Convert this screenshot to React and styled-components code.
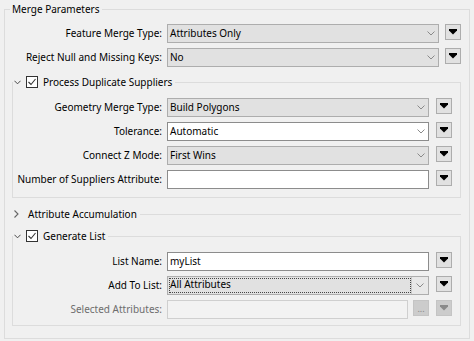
import styled, { createGlobalStyle } from 'styled-components';

const GlobalStyle = createGlobalStyle`
  html, body {
    margin: 0;
    padding: 0;
    background: #f0f0f0;
  }
  body {
    font-family: "Noto Sans", "Segoe UI", sans-serif;
    font-size: 10px;
    color: #000;
  }
`;

const Panel = styled.div`
  width: 474px;
  height: 341px;
  box-sizing: border-box;
  padding: 1px 4px 0 4px;
  overflow: hidden;
`;

const Group = styled.fieldset`
  margin: ${(p) => (p.$outer ? '0' : `${p.$top || 7}px 8px 0 7px`)};
  padding: 0;
  min-width: 0;
  border: 1px solid #dcdcdc;
`;

const Legend = styled.legend`
  display: flex;
  align-items: center;
  height: 16px;
  margin-left: ${(p) => (p.$outer ? '5px' : '0')};
  padding: ${(p) => (p.$outer ? '0 2px' : '0 3px 0 1px')};
  gap: 5px;
  line-height: 16px;
  white-space: nowrap;
`;

const Rows = styled.div`
  display: flex;
  flex-direction: column;
  gap: 5px;
  padding: ${(p) => p.$pad};
`;

const Row = styled.div`
  display: flex;
  align-items: flex-start;
  height: 19px;
`;

const Label = styled.div`
  width: ${(p) => p.$w}px;
  margin-right: 5px;
  height: 19px;
  line-height: 19px;
  text-align: right;
  white-space: nowrap;
  color: ${(p) => (p.$disabled ? '#6d6d6d' : '#000')};
`;

const Field = styled.div`
  flex: 1;
  display: flex;
  align-items: center;
  box-sizing: border-box;
  height: 19px;
  padding-left: 2px;
  background: ${(p) => (p.$white ? '#fff' : p.$disabled ? '#f2f2f2' : '#e1e1e1')};
  border: 1px solid ${(p) => (p.$white ? '#8c8c8c' : p.$disabled ? '#cfcfcf' : '#adadad')};
  white-space: nowrap;
`;

const FieldText = styled.span`
  flex: 1;
  line-height: 17px;
`;

const FocusText = styled.span`
  flex: 1;
  align-self: stretch;
  margin: 1px 0 1px -1px;
  padding-left: 1px;
  line-height: 13px;
  outline: 1px dotted #444;
  outline-offset: -1px;
`;

const ArrowZone = styled.span`
  display: flex;
  align-items: center;
  justify-content: center;
  width: ${(p) => (p.$split ? 16 : 14)}px;
  align-self: stretch;
  border-left: ${(p) => (p.$split ? '1px solid #c8c8c8' : 'none')};
  background: ${(p) => (p.$split ? '#e8e8e8' : 'transparent')};
`;

const MenuButton = styled.div`
  display: flex;
  align-items: center;
  justify-content: center;
  box-sizing: border-box;
  width: 16px;
  height: 16px;
  margin-left: ${(p) => p.$gap || 7}px;
  background: ${(p) => (p.$disabled ? '#cccccc' : '#e1e1e1')};
  border: 1px solid ${(p) => (p.$disabled ? '#c4c4c4' : '#adadad')};
  color: #888;
  font-size: 9px;
  line-height: 1;
`;

const Collapsed = styled.div`
  display: flex;
  align-items: center;
  height: 16px;
  margin: 8px 8px 0 8px;
  white-space: nowrap;
`;

const Chevron = styled.span`
  display: flex;
  align-items: center;
  justify-content: center;
  width: 7px;
  height: 16px;
`;

const HeaderLine = styled.div`
  flex: 1;
  margin-left: 3px;
  border-top: 1px solid #dcdcdc;
`;

const CollapsedTitle = styled.span`
  margin-left: 8px;
`;

const Check = styled.span`
  display: flex;
  align-items: center;
  justify-content: center;
  box-sizing: border-box;
  width: 12px;
  height: 12px;
  background: #fff;
  border: 1px solid #333;
`;

const Footer = styled.div`
  height: 12px;
`;

const DownChevron = ({ color = '#444', w = 1.1 }) => (
  <svg width="8" height="5" viewBox="0 0 8 5">
    <polyline points="0.5,0.5 4,4 7.5,0.5" fill="none" stroke={color} strokeWidth={w} />
  </svg>
);

const RightChevron = () => (
  <svg width="5" height="8" viewBox="0 0 5 8">
    <polyline points="0.5,0.5 4,4 0.5,7.5" fill="none" stroke="#666" strokeWidth="1.1" />
  </svg>
);

const Tick = () => (
  <svg width="10" height="10" viewBox="0 0 10 10">
    <polyline points="1.5,5 4,7.5 8.5,2" fill="none" stroke="#333" strokeWidth="1.1" />
  </svg>
);

const Triangle = ({ color = '#000' }) => (
  <svg width="8" height="6" viewBox="0 0 8 6">
    <path d="M0 0H8V1.5L4 5.5L0 1.5Z" fill={color} />
  </svg>
);

const Combo = ({ value, white }) => (
  <Field $white={white}>
    <FieldText>{value}</FieldText>
    <ArrowZone>
      <DownChevron color="#8a8a8a" w={1} />
    </ArrowZone>
  </Field>
);

const ParamRow = ({ label, w, children, disabled }) => (
  <Row>
    <Label $w={w} $disabled={disabled}>
      {label}
    </Label>
    {children}
  </Row>
);

const SubGroup = ({ title, top, children, pad }) => (
  <Group $top={top}>
    <Legend>
      <Chevron>
        <DownChevron />
      </Chevron>
      <Check>
        <Tick />
      </Check>
      <span>{title}</span>
    </Legend>
    <Rows $pad={pad}>{children}</Rows>
  </Group>
);

export default function App() {
  return (
    <>
      <GlobalStyle />
      <Panel>
        <Group $outer>
          <Legend $outer>Merge Parameters</Legend>
          <Rows $pad="7px 8px 0 0">
            <ParamRow label="Feature Merge Type:" w={157}>
              <Combo value="Attributes Only" />
              <MenuButton $gap={6}>
                <Triangle />
              </MenuButton>
            </ParamRow>
            <ParamRow label="Reject Null and Missing Keys:" w={157}>
              <Combo value="No" />
              <MenuButton $gap={6}>
                <Triangle />
              </MenuButton>
            </ParamRow>
          </Rows>

          <SubGroup title="Process Duplicate Suppliers" top={7} pad="8px 8px 8px 0">
            <ParamRow label="Geometry Merge Type:" w={149}>
              <Combo value="Build Polygons" />
              <MenuButton>
                <Triangle />
              </MenuButton>
            </ParamRow>
            <ParamRow label="Tolerance:" w={149}>
              <Combo value="Automatic" white />
              <MenuButton>
                <Triangle />
              </MenuButton>
            </ParamRow>
            <ParamRow label="Connect Z Mode:" w={149}>
              <Combo value="First Wins" />
              <MenuButton>
                <Triangle />
              </MenuButton>
            </ParamRow>
            <ParamRow label="Number of Suppliers Attribute:" w={149}>
              <Field $white />
              <MenuButton>
                <Triangle />
              </MenuButton>
            </ParamRow>
          </SubGroup>

          <Collapsed>
            <Chevron>
              <RightChevron />
            </Chevron>
            <CollapsedTitle>Attribute Accumulation</CollapsedTitle>
            <HeaderLine />
          </Collapsed>

          <SubGroup title="Generate List" top={6} pad="8px 8px 6px 0">
            <ParamRow label="List Name:" w={149}>
              <Field $white>
                <FieldText>myList</FieldText>
              </Field>
              <MenuButton>
                <Triangle />
              </MenuButton>
            </ParamRow>
            <ParamRow label="Add To List:" w={149}>
              <Field>
                <FocusText>All Attributes</FocusText>
                <ArrowZone $split>
                  <DownChevron color="#8a8a8a" w={1} />
                </ArrowZone>
              </Field>
              <MenuButton>
                <Triangle />
              </MenuButton>
            </ParamRow>
            <ParamRow label="Selected Attributes:" w={149} disabled>
              <Field $disabled />
              <MenuButton $disabled $gap={5}>
                ...
              </MenuButton>
              <MenuButton $disabled>
                <Triangle color="#8a8a8a" />
              </MenuButton>
            </ParamRow>
          </SubGroup>
          <Footer />
        </Group>
      </Panel>
    </>
  );
}
